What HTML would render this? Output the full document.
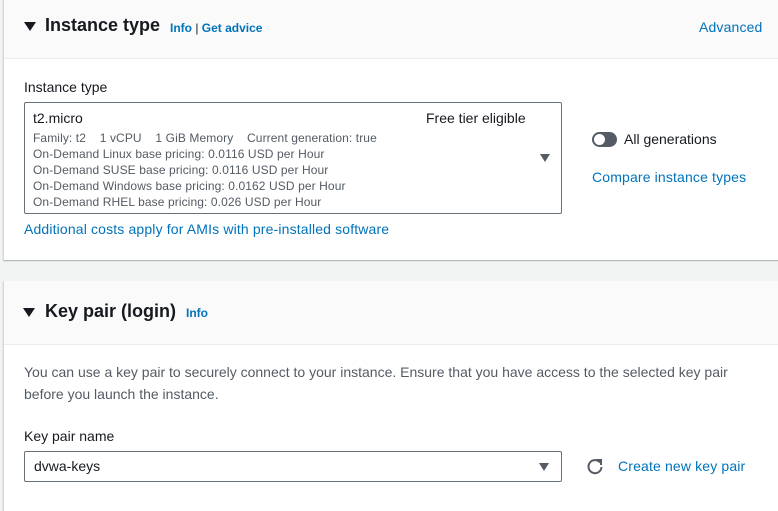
<!DOCTYPE html>
<html><head><style>
*{margin:0;padding:0;box-sizing:border-box}
body{width:778px;height:502px;overflow:hidden;background:#f2f3f3;font-family:"Liberation Sans",sans-serif;color:#16191f;position:relative}
.card{position:absolute;left:3px;width:780px;background:#fff;border-left:1px solid #d5dbdb;box-shadow:0 1px 1px rgba(0,28,36,.3)}
.hdr{background:#fafafa;border-bottom:1px solid #eaeded;position:absolute;left:0;right:0;top:0}
.abs{position:absolute;white-space:nowrap}
.tri{width:0;height:0;border-left:6px solid transparent;border-right:6px solid transparent;border-top:9px solid #16191f}
.h{font-size:18px;font-weight:bold}
.info{font-size:12px;font-weight:bold;color:#0073bb}
.lnk{color:#0073bb;font-size:14px;letter-spacing:.15px}
.sm{font-size:12px;color:#545b64;letter-spacing:.1px}
.box{position:absolute;border:1px solid #687078;border-radius:2px;background:#fff}
.dd{width:0;height:0;border-left:5px solid transparent;border-right:5px solid transparent;border-top:8px solid #545b64}
</style></head><body>
<div class="card" style="top:-5px;height:265px">
 <div class="hdr" style="height:64px"></div>
 <div class="abs tri" style="left:20px;top:27px"></div>
 <div class="abs h" style="left:41px;top:20px">Instance type</div>
 <div class="abs info" style="left:166px;top:26px">Info <span style="color:#16191f;font-weight:normal">|</span> Get advice</div>
 <div class="abs lnk" style="left:695px;top:24px">Advanced</div>
 <div class="abs" style="left:20px;top:84px;font-size:14px">Instance type</div>
 <div class="box" style="left:20px;top:107px;width:538px;height:112px"></div>
 <div class="abs" style="left:29px;top:115px;font-size:14px">t2.micro</div>
 <div class="abs" style="left:422px;top:115px;font-size:14px">Free tier eligible</div>
 <div class="abs sm" style="left:29px;top:135px;line-height:16px">Family: t2&nbsp;&nbsp;&nbsp;&nbsp;1 vCPU&nbsp;&nbsp;&nbsp;&nbsp;1 GiB Memory&nbsp;&nbsp;&nbsp;&nbsp;Current generation: true<br>On-Demand Linux base pricing: 0.0116 USD per Hour<br>On-Demand SUSE base pricing: 0.0116 USD per Hour<br>On-Demand Windows base pricing: 0.0162 USD per Hour<br>On-Demand RHEL base pricing: 0.026 USD per Hour</div>
 <div class="abs dd" style="left:536px;top:159px"></div>
 <div class="abs" style="left:588px;top:137px;width:25px;height:15px;border-radius:8px;background:#545b64"><div style="position:absolute;left:2px;top:2px;width:11px;height:11px;border-radius:6px;background:#fff"></div></div>
 <div class="abs" style="left:620px;top:136px;font-size:14px">All generations</div>
 <div class="abs lnk" style="left:588px;top:174px">Compare instance types</div>
 <div class="abs lnk" style="left:20px;top:226px">Additional costs apply for AMIs with pre-installed software</div>
</div>
<div class="card" style="top:281px;height:230px">
 <div class="hdr" style="height:64px"></div>
 <div class="abs tri" style="left:19px;top:27px"></div>
 <div class="abs h" style="left:41px;top:20px">Key pair (login)</div>
 <div class="abs info" style="left:182px;top:25px">Info</div>
 <div class="abs" style="left:20px;top:80px;font-size:14px;line-height:22px;color:#545b64">You can use a key pair to securely connect to your instance. Ensure that you have access to the selected key pair<br>before you launch the instance.</div>
 <div class="abs" style="left:20px;top:147px;font-size:14px">Key pair name</div>
 <div class="box" style="left:20px;top:170px;width:538px;height:31px"></div>
 <div class="abs" style="left:30px;top:177px;font-size:14px">dvwa-keys</div>
 <div class="abs dd" style="left:535px;top:182px"></div>
 <svg class="abs" style="left:582px;top:177px" width="18" height="18" viewBox="0 0 18 18"><path d="M14 4.5A6.5 6.5 0 1 0 15.5 9" fill="none" stroke="#545b64" stroke-width="2"/><path d="M10 2h5v5" fill="none" stroke="#545b64" stroke-width="2"/></svg>
 <div class="abs lnk" style="left:614px;top:177px">Create new key pair</div>
</div>
</body></html>
